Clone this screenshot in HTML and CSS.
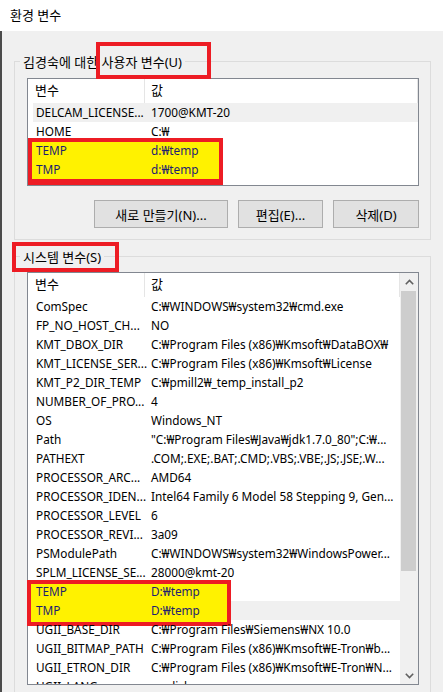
FILE: index.html
```html
<!DOCTYPE html>
<html lang="ko">
<head>
<meta charset="utf-8">
<title>환경 변수</title>
<link rel="stylesheet" href="styles.css">
</head>
<body>
<div class="window">
  <div class="titlebar">환경 변수</div>
  <div class="client">

    <section class="group user-group">
      <div class="legend">김경숙에 대한 사용자 변수(U)</div>
      <div class="list user-list">
        <div class="list-body">
          <div class="head"><span class="h1">변수</span><span class="h2">값</span></div>
          <div class="row sel"><span class="c1">DELCAM_LICENSE...</span><span class="c2">1700@KMT-20</span></div>
          <div class="row"><span class="c1">HOME</span><span class="c2">C:₩</span></div>
          <div class="row hot"><span class="c1">TEMP</span><span class="c2">d:₩temp</span></div>
          <div class="row hot"><span class="c1">TMP</span><span class="c2">d:₩temp</span></div>
        </div>
      </div>
      <div class="buttons">
        <button class="btn btn-new">새로 만들기(N)...</button>
        <button class="btn btn-edit">편집(E)...</button>
        <button class="btn btn-del">삭제(D)</button>
      </div>
    </section>

    <section class="group sys-group">
      <div class="legend">시스템 변수(S)</div>
      <div class="list sys-list">
        <div class="list-body">
          <div class="head"><span class="h1">변수</span><span class="h2">값</span></div>
          <div class="row"><span class="c1">ComSpec</span><span class="c2">C:₩WINDOWS₩system32₩cmd.exe</span></div>
          <div class="row"><span class="c1">FP_NO_HOST_CH...</span><span class="c2">NO</span></div>
          <div class="row"><span class="c1">KMT_DBOX_DIR</span><span class="c2">C:₩Program Files (x86)₩Kmsoft₩DataBOX₩</span></div>
          <div class="row"><span class="c1">KMT_LICENSE_SER...</span><span class="c2">C:₩Program Files (x86)₩Kmsoft₩License</span></div>
          <div class="row"><span class="c1">KMT_P2_DIR_TEMP</span><span class="c2">C:₩pmill2₩_temp_install_p2</span></div>
          <div class="row"><span class="c1">NUMBER_OF_PRO...</span><span class="c2">4</span></div>
          <div class="row"><span class="c1">OS</span><span class="c2">Windows_NT</span></div>
          <div class="row"><span class="c1">Path</span><span class="c2">"C:₩Program Files₩Java₩jdk1.7.0_80";C:₩...</span></div>
          <div class="row"><span class="c1">PATHEXT</span><span class="c2">.COM;.EXE;.BAT;.CMD;.VBS;.VBE;.JS;.JSE;.W...</span></div>
          <div class="row"><span class="c1">PROCESSOR_ARC...</span><span class="c2">AMD64</span></div>
          <div class="row"><span class="c1">PROCESSOR_IDEN...</span><span class="c2">Intel64 Family 6 Model 58 Stepping 9, Gen...</span></div>
          <div class="row"><span class="c1">PROCESSOR_LEVEL</span><span class="c2">6</span></div>
          <div class="row"><span class="c1">PROCESSOR_REVI...</span><span class="c2">3a09</span></div>
          <div class="row"><span class="c1">PSModulePath</span><span class="c2">C:₩WINDOWS₩system32₩WindowsPower...</span></div>
          <div class="row"><span class="c1">SPLM_LICENSE_SE...</span><span class="c2">28000@kmt-20</span></div>
          <div class="row hot"><span class="c1">TEMP</span><span class="c2">D:₩temp</span></div>
          <div class="row hot sel"><span class="c1">TMP</span><span class="c2">D:₩temp</span></div>
          <div class="row"><span class="c1">UGII_BASE_DIR</span><span class="c2">C:₩Program Files₩Siemens₩NX 10.0</span></div>
          <div class="row"><span class="c1">UGII_BITMAP_PATH</span><span class="c2">C:₩Program Files (x86)₩Kmsoft₩E-Tron₩b...</span></div>
          <div class="row"><span class="c1">UGII_ETRON_DIR</span><span class="c2">C:₩Program Files (x86)₩Kmsoft₩E-Tron₩N...</span></div>
          <div class="row"><span class="c1">UGII_LANG</span><span class="c2">english</span></div>
        </div>
        <div class="scrollbar">
          <div class="sb-arrow">
            <svg width="9" height="6" viewBox="0 0 9 6"><path d="M0.8 5.2 L4.5 1.5 L8.2 5.2" fill="none" stroke="#606060" stroke-width="1.6"/></svg>
          </div>
          <div class="sb-thumb"></div>
          <div class="sb-track"></div>
          <div class="sb-arrow">
            <svg width="9" height="6" viewBox="0 0 9 6"><path d="M0.8 0.8 L4.5 4.5 L8.2 0.8" fill="none" stroke="#606060" stroke-width="1.6"/></svg>
          </div>
        </div>
      </div>
    </section>

  </div>

  <!-- highlighter marks drawn over the dialog -->
  <div class="mark mark-user-label"></div>
  <div class="mark fill mark-user-rows"></div>
  <div class="mark mark-sys-label"></div>
  <div class="mark fill mark-sys-rows"></div>
</div>
</body>
</html>
```

FILE: styles.css
```css
* {
  box-sizing: border-box;
  margin: 0;
  padding: 0;
}

html,
body {
  width: 443px;
  height: 692px;
  overflow: hidden;
}

body {
  background: #f0f0f0;
  font-family: "Noto Sans", "Noto Sans CJK KR", sans-serif;
  font-size: 13px;
  color: #000;
}

.window {
  position: relative;
  width: 443px;
  height: 692px;
  display: flex;
  flex-direction: column;
}

.titlebar {
  flex: none;
  height: 31px;
  line-height: 30px;
  padding-left: 10px;
  background: #fff;
}

.client {
  flex: 1;
  overflow: hidden;
  border-left: 2px solid #4b4b4b;
  padding: 30px 0 0 12px;
}

/* group boxes */
.group {
  width: 417px;
  border: 1px solid #dcdcdc;
  padding-left: 12px;
}

.user-group {
  height: 179px;
}

.sys-group {
  height: 460px;
  margin-top: 16px;
}

.legend {
  width: fit-content;
  margin: -8px 0 0 -7px;
  padding: 0 3px;
  line-height: 16px;
  background: #f0f0f0;
}

/* list views */
.list {
  display: flex;
  width: 392px;
  border: 1px solid #828790;
  background: #fff;
  overflow: hidden;
}

.user-list {
  height: 108px;
  margin-top: 8px;
}

.sys-list {
  height: 413px;
  margin-top: 7px;
}

.list-body {
  flex: 1;
  min-width: 0;
  overflow: hidden;
}

.head {
  display: flex;
  height: 24px;
  line-height: 23px;
}

.h1 {
  width: 117px;
  padding-left: 7px;
  border-right: 1px solid #e5e5e5;
}

.h2 {
  flex: 1;
  padding-left: 6px;
  border-right: 1px solid #e5e5e5;
}

.row {
  display: flex;
  height: 19px;
  line-height: 19px;
  margin-left: 5px;
  font-size: 11.8px;
  white-space: nowrap;
}

.row.sel {
  background: #f0f0f0;
}

.c1,
.c2 {
  position: relative;
  z-index: 2;
}

.c1 {
  flex: none;
  width: 111px;
  padding-left: 3px;
}

.c2 {
  flex: 1;
  padding-left: 7px;
  overflow: hidden;
}

.row.hot {
  color: #1e1e70;
}

/* scroll bar */
.scrollbar {
  flex: none;
  width: 18px;
  display: flex;
  flex-direction: column;
  background: #f0f0f0;
}

.sb-arrow {
  flex: none;
  height: 17px;
  display: flex;
  align-items: center;
  justify-content: center;
}

.sb-thumb {
  flex: none;
  height: 280px;
  margin: 1px 2px 0 1px;
  background: #cdcdcd;
}

.sb-track {
  flex: 1;
}

/* buttons */
.buttons {
  display: flex;
  justify-content: flex-end;
  gap: 10px;
  width: 392px;
  margin-top: 14px;
}

.btn {
  height: 28px;
  background: #e1e1e1;
  border: 1px solid #adadad;
  font: inherit;
  color: #000;
}

.btn-new {
  width: 134px;
}

.btn-edit {
  width: 85px;
}

.btn-del {
  width: 86px;
}

/* red highlighter marks */
.mark {
  position: absolute;
  border: 4px solid #ed1c24;
  z-index: 3;
}

.mark.fill {
  background: #fff200;
  z-index: 1;
}

.mark-user-label {
  left: 96px;
  top: 42px;
  width: 115px;
  height: 37px;
}

.mark-user-rows {
  left: 28px;
  top: 138px;
  width: 195px;
  height: 47px;
  border-bottom-width: 6px;
}

.mark-sys-label {
  left: 12px;
  top: 242px;
  width: 107px;
  height: 30px;
}

.mark-sys-rows {
  left: 27px;
  top: 580px;
  width: 204px;
  height: 46px;
}
```
